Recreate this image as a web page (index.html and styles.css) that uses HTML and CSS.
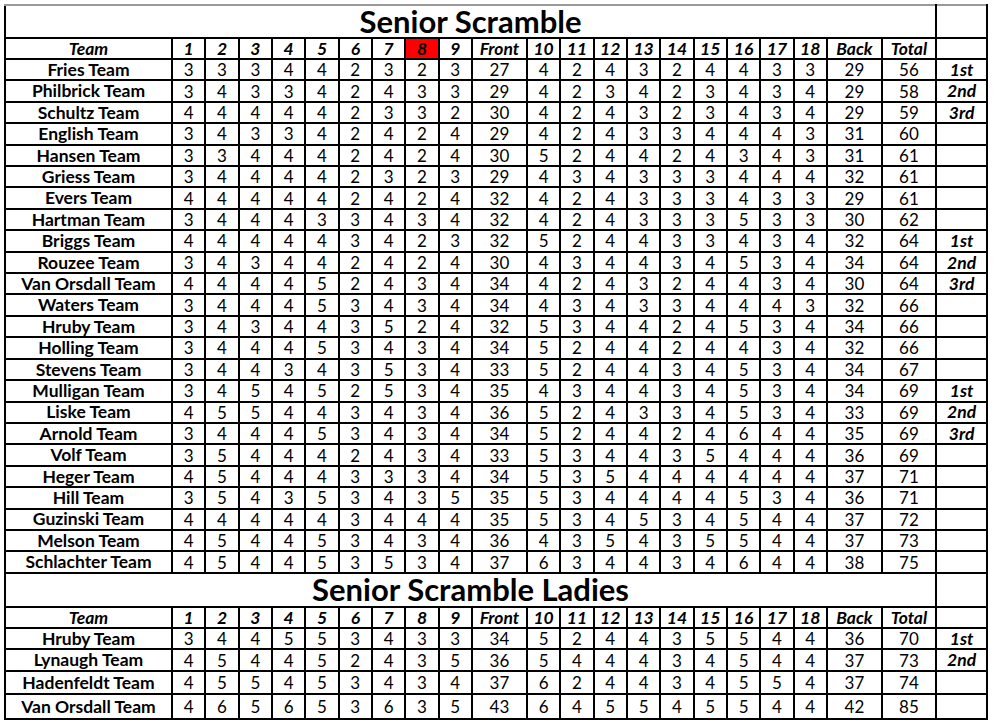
FILE: index.html
```html
<!DOCTYPE html>
<html lang="en">
<head>
<meta charset="utf-8">
<title>Senior Scramble</title>
<link rel="stylesheet" href="styles.css">
</head>
<body>
<table class="scores">
<colgroup>
<col class="c-team">
<col class="c-hole"><col class="c-hole"><col class="c-hole"><col class="c-hole"><col class="c-hole"><col class="c-hole"><col class="c-hole"><col class="c-hole"><col class="c-hole">
<col class="c-sum">
<col class="c-hole"><col class="c-hole"><col class="c-hole"><col class="c-hole"><col class="c-hole"><col class="c-hole"><col class="c-hole"><col class="c-hole"><col class="c-hole">
<col class="c-sum">
<col class="c-total">
<col class="c-rank">
</colgroup>
<tbody>
<tr class="title-row first"><td colspan="22" class="title">Senior Scramble</td><td class="rank"></td></tr>
<tr class="head-row"><th>Team</th><th>1</th><th>2</th><th>3</th><th>4</th><th>5</th><th>6</th><th>7</th><th class="hot">8</th><th>9</th><th>Front</th><th>10</th><th>11</th><th>12</th><th>13</th><th>14</th><th>15</th><th>16</th><th>17</th><th>18</th><th>Back</th><th>Total</th><th class="rank"></th></tr>
<tr class="row"><td class="team">Fries Team</td><td>3</td><td>3</td><td>3</td><td>4</td><td>4</td><td>2</td><td>3</td><td>2</td><td>3</td><td>27</td><td>4</td><td>2</td><td>4</td><td>3</td><td>2</td><td>4</td><td>4</td><td>3</td><td>3</td><td>29</td><td>56</td><td class="rank">1st</td></tr>
<tr class="row"><td class="team">Philbrick Team</td><td>3</td><td>4</td><td>3</td><td>3</td><td>4</td><td>2</td><td>4</td><td>3</td><td>3</td><td>29</td><td>4</td><td>2</td><td>3</td><td>4</td><td>2</td><td>3</td><td>4</td><td>3</td><td>4</td><td>29</td><td>58</td><td class="rank">2nd</td></tr>
<tr class="row"><td class="team">Schultz Team</td><td>4</td><td>4</td><td>4</td><td>4</td><td>4</td><td>2</td><td>3</td><td>3</td><td>2</td><td>30</td><td>4</td><td>2</td><td>4</td><td>3</td><td>2</td><td>3</td><td>4</td><td>3</td><td>4</td><td>29</td><td>59</td><td class="rank">3rd</td></tr>
<tr class="row"><td class="team">English Team</td><td>3</td><td>4</td><td>3</td><td>3</td><td>4</td><td>2</td><td>4</td><td>2</td><td>4</td><td>29</td><td>4</td><td>2</td><td>4</td><td>3</td><td>3</td><td>4</td><td>4</td><td>4</td><td>3</td><td>31</td><td>60</td><td class="rank"></td></tr>
<tr class="row"><td class="team">Hansen Team</td><td>3</td><td>3</td><td>4</td><td>4</td><td>4</td><td>2</td><td>4</td><td>2</td><td>4</td><td>30</td><td>5</td><td>2</td><td>4</td><td>4</td><td>2</td><td>4</td><td>3</td><td>4</td><td>3</td><td>31</td><td>61</td><td class="rank"></td></tr>
<tr class="row"><td class="team">Griess Team</td><td>3</td><td>4</td><td>4</td><td>4</td><td>4</td><td>2</td><td>3</td><td>2</td><td>3</td><td>29</td><td>4</td><td>3</td><td>4</td><td>3</td><td>3</td><td>3</td><td>4</td><td>4</td><td>4</td><td>32</td><td>61</td><td class="rank"></td></tr>
<tr class="row"><td class="team">Evers Team</td><td>4</td><td>4</td><td>4</td><td>4</td><td>4</td><td>2</td><td>4</td><td>2</td><td>4</td><td>32</td><td>4</td><td>2</td><td>4</td><td>3</td><td>3</td><td>3</td><td>4</td><td>3</td><td>3</td><td>29</td><td>61</td><td class="rank"></td></tr>
<tr class="row"><td class="team">Hartman Team</td><td>3</td><td>4</td><td>4</td><td>4</td><td>3</td><td>3</td><td>4</td><td>3</td><td>4</td><td>32</td><td>4</td><td>2</td><td>4</td><td>3</td><td>3</td><td>3</td><td>5</td><td>3</td><td>3</td><td>30</td><td>62</td><td class="rank"></td></tr>
<tr class="row"><td class="team">Briggs Team</td><td>4</td><td>4</td><td>4</td><td>4</td><td>4</td><td>3</td><td>4</td><td>2</td><td>3</td><td>32</td><td>5</td><td>2</td><td>4</td><td>4</td><td>3</td><td>3</td><td>4</td><td>3</td><td>4</td><td>32</td><td>64</td><td class="rank">1st</td></tr>
<tr class="row"><td class="team">Rouzee Team</td><td>3</td><td>4</td><td>3</td><td>4</td><td>4</td><td>2</td><td>4</td><td>2</td><td>4</td><td>30</td><td>4</td><td>3</td><td>4</td><td>4</td><td>3</td><td>4</td><td>5</td><td>3</td><td>4</td><td>34</td><td>64</td><td class="rank">2nd</td></tr>
<tr class="row"><td class="team">Van Orsdall Team</td><td>4</td><td>4</td><td>4</td><td>4</td><td>5</td><td>2</td><td>4</td><td>3</td><td>4</td><td>34</td><td>4</td><td>2</td><td>4</td><td>3</td><td>2</td><td>4</td><td>4</td><td>3</td><td>4</td><td>30</td><td>64</td><td class="rank">3rd</td></tr>
<tr class="row"><td class="team">Waters Team</td><td>3</td><td>4</td><td>4</td><td>4</td><td>5</td><td>3</td><td>4</td><td>3</td><td>4</td><td>34</td><td>4</td><td>3</td><td>4</td><td>3</td><td>3</td><td>4</td><td>4</td><td>4</td><td>3</td><td>32</td><td>66</td><td class="rank"></td></tr>
<tr class="row"><td class="team">Hruby Team</td><td>3</td><td>4</td><td>3</td><td>4</td><td>4</td><td>3</td><td>5</td><td>2</td><td>4</td><td>32</td><td>5</td><td>3</td><td>4</td><td>4</td><td>2</td><td>4</td><td>5</td><td>3</td><td>4</td><td>34</td><td>66</td><td class="rank"></td></tr>
<tr class="row"><td class="team">Holling Team</td><td>3</td><td>4</td><td>4</td><td>4</td><td>5</td><td>3</td><td>4</td><td>3</td><td>4</td><td>34</td><td>5</td><td>2</td><td>4</td><td>4</td><td>2</td><td>4</td><td>4</td><td>3</td><td>4</td><td>32</td><td>66</td><td class="rank"></td></tr>
<tr class="row"><td class="team">Stevens Team</td><td>3</td><td>4</td><td>4</td><td>3</td><td>4</td><td>3</td><td>5</td><td>3</td><td>4</td><td>33</td><td>5</td><td>2</td><td>4</td><td>4</td><td>3</td><td>4</td><td>5</td><td>3</td><td>4</td><td>34</td><td>67</td><td class="rank"></td></tr>
<tr class="row"><td class="team">Mulligan Team</td><td>3</td><td>4</td><td>5</td><td>4</td><td>5</td><td>2</td><td>5</td><td>3</td><td>4</td><td>35</td><td>4</td><td>3</td><td>4</td><td>4</td><td>3</td><td>4</td><td>5</td><td>3</td><td>4</td><td>34</td><td>69</td><td class="rank">1st</td></tr>
<tr class="row"><td class="team">Liske Team</td><td>4</td><td>5</td><td>5</td><td>4</td><td>4</td><td>3</td><td>4</td><td>3</td><td>4</td><td>36</td><td>5</td><td>2</td><td>4</td><td>3</td><td>3</td><td>4</td><td>5</td><td>3</td><td>4</td><td>33</td><td>69</td><td class="rank">2nd</td></tr>
<tr class="row"><td class="team">Arnold Team</td><td>3</td><td>4</td><td>4</td><td>4</td><td>5</td><td>3</td><td>4</td><td>3</td><td>4</td><td>34</td><td>5</td><td>2</td><td>4</td><td>4</td><td>2</td><td>4</td><td>6</td><td>4</td><td>4</td><td>35</td><td>69</td><td class="rank">3rd</td></tr>
<tr class="row"><td class="team">Volf Team</td><td>3</td><td>5</td><td>4</td><td>4</td><td>4</td><td>2</td><td>4</td><td>3</td><td>4</td><td>33</td><td>5</td><td>3</td><td>4</td><td>4</td><td>3</td><td>5</td><td>4</td><td>4</td><td>4</td><td>36</td><td>69</td><td class="rank"></td></tr>
<tr class="row"><td class="team">Heger Team</td><td>4</td><td>5</td><td>4</td><td>4</td><td>4</td><td>3</td><td>3</td><td>3</td><td>4</td><td>34</td><td>5</td><td>3</td><td>5</td><td>4</td><td>4</td><td>4</td><td>4</td><td>4</td><td>4</td><td>37</td><td>71</td><td class="rank"></td></tr>
<tr class="row"><td class="team">Hill Team</td><td>3</td><td>5</td><td>4</td><td>3</td><td>5</td><td>3</td><td>4</td><td>3</td><td>5</td><td>35</td><td>5</td><td>3</td><td>4</td><td>4</td><td>4</td><td>4</td><td>5</td><td>3</td><td>4</td><td>36</td><td>71</td><td class="rank"></td></tr>
<tr class="row"><td class="team">Guzinski Team</td><td>4</td><td>4</td><td>4</td><td>4</td><td>4</td><td>3</td><td>4</td><td>4</td><td>4</td><td>35</td><td>5</td><td>3</td><td>4</td><td>5</td><td>3</td><td>4</td><td>5</td><td>4</td><td>4</td><td>37</td><td>72</td><td class="rank"></td></tr>
<tr class="row"><td class="team">Melson Team</td><td>4</td><td>5</td><td>4</td><td>4</td><td>5</td><td>3</td><td>4</td><td>3</td><td>4</td><td>36</td><td>4</td><td>3</td><td>5</td><td>4</td><td>3</td><td>5</td><td>5</td><td>4</td><td>4</td><td>37</td><td>73</td><td class="rank"></td></tr>
<tr class="row"><td class="team">Schlachter Team</td><td>4</td><td>5</td><td>4</td><td>4</td><td>5</td><td>3</td><td>5</td><td>3</td><td>4</td><td>37</td><td>6</td><td>3</td><td>4</td><td>4</td><td>3</td><td>4</td><td>6</td><td>4</td><td>4</td><td>38</td><td>75</td><td class="rank"></td></tr>
<tr class="title-row second"><td colspan="22" class="title">Senior Scramble Ladies</td><td class="rank"></td></tr>
<tr class="head-row"><th>Team</th><th>1</th><th>2</th><th>3</th><th>4</th><th>5</th><th>6</th><th>7</th><th>8</th><th>9</th><th>Front</th><th>10</th><th>11</th><th>12</th><th>13</th><th>14</th><th>15</th><th>16</th><th>17</th><th>18</th><th>Back</th><th>Total</th><th class="rank"></th></tr>
<tr class="row l1"><td class="team">Hruby Team</td><td>3</td><td>4</td><td>4</td><td>5</td><td>5</td><td>3</td><td>4</td><td>3</td><td>3</td><td>34</td><td>5</td><td>2</td><td>4</td><td>4</td><td>3</td><td>5</td><td>5</td><td>4</td><td>4</td><td>36</td><td>70</td><td class="rank">1st</td></tr>
<tr class="row l2"><td class="team">Lynaugh Team</td><td>4</td><td>5</td><td>4</td><td>4</td><td>5</td><td>2</td><td>4</td><td>3</td><td>5</td><td>36</td><td>5</td><td>4</td><td>4</td><td>4</td><td>3</td><td>4</td><td>5</td><td>4</td><td>4</td><td>37</td><td>73</td><td class="rank">2nd</td></tr>
<tr class="row l3"><td class="team">Hadenfeldt Team</td><td>4</td><td>5</td><td>5</td><td>4</td><td>5</td><td>3</td><td>4</td><td>3</td><td>4</td><td>37</td><td>6</td><td>2</td><td>4</td><td>4</td><td>3</td><td>4</td><td>5</td><td>5</td><td>4</td><td>37</td><td>74</td><td class="rank"></td></tr>
<tr class="row l4"><td class="team">Van Orsdall Team</td><td>4</td><td>6</td><td>5</td><td>6</td><td>5</td><td>3</td><td>6</td><td>3</td><td>5</td><td>43</td><td>6</td><td>4</td><td>5</td><td>5</td><td>4</td><td>5</td><td>5</td><td>4</td><td>4</td><td>42</td><td>85</td><td class="rank"></td></tr>
</tbody>
</table>
</body>
</html>
```
FILE: styles.css
```css
html, body {
  margin: 0;
  background: #ffffff;
}
body {
  padding: 4px 0 0 4px;
  font-family: Lato, "Liberation Sans", Arial, sans-serif;
  color: #000;
}
.scores {
  border-collapse: collapse;
  table-layout: fixed;
  width: 983px;
}
.c-team { width: 167px; }
.c-hole { width: 33.33px; }
.c-sum { width: 55px; }
.c-total { width: 54px; }
.c-rank { width: 51px; }

.scores td,
.scores th {
  border: 2px solid #000;
  padding: 0;
  text-align: center;
  vertical-align: middle;
  white-space: nowrap;
  overflow: hidden;
  font-size: 17px;
  line-height: 1;
  font-weight: 400;
  color: #000;
}
.scores th {
  font-weight: 700;
  font-style: italic;
  font-size: 17.5px;
}
.scores td.team {
  font-weight: 700;
  font-size: 17.5px;
}
.scores td.rank,
.scores th.rank {
  font-weight: 700;
  font-style: italic;
  font-size: 17.5px;
}
.scores th.hot {
  background: #ff0000;
}
.scores td.title {
  font-size: 31px;
  font-weight: 700;
  line-height: 31px;
  overflow: visible;
}
.first td {
  border-top-color: #9a9a9a;
}
.title-row td { height: 31px; }
.second td { height: 32px; }
.head-row th { height: 19px; }
.row td { height: 19.42px; }
.row.l2 td { height: 20px; }
.row.l3 td { height: 21px; }
.row.l4 td { height: 23px; }
```
